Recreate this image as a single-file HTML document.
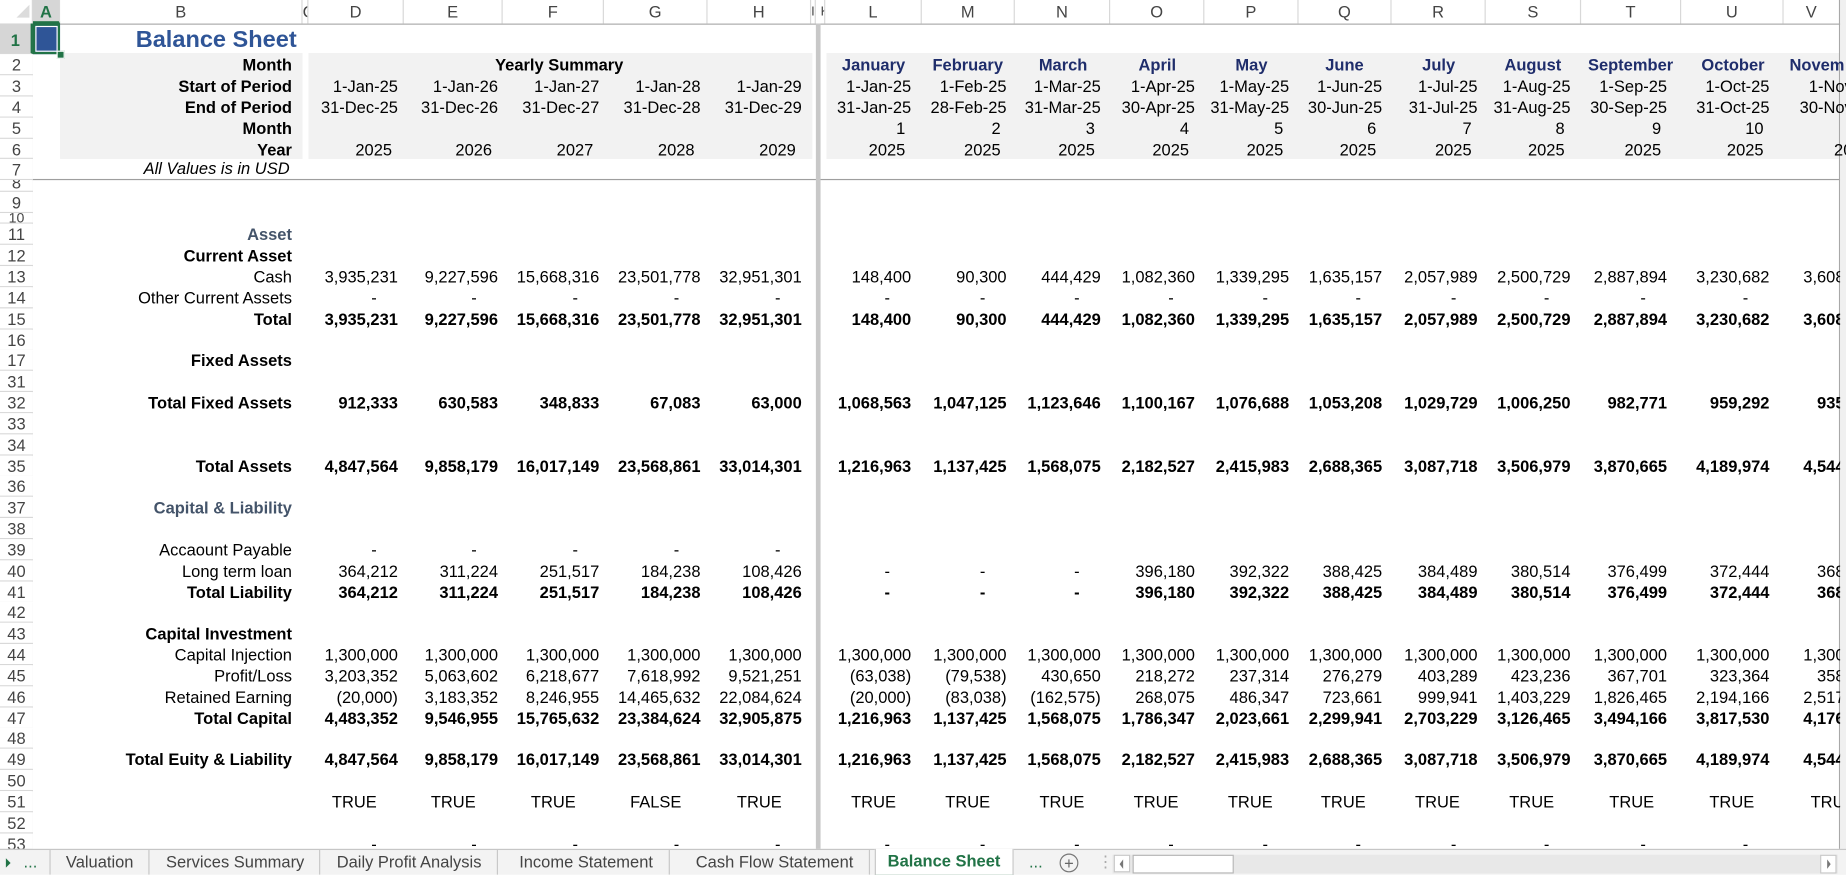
<!DOCTYPE html>
<html><head><meta charset="utf-8"><style>
html,body{margin:0;padding:0;background:#fff;overflow:hidden;width:1846px;height:875px}
#w{position:absolute;left:0;top:0;width:1568px;height:743px;transform:scale(1.17730);transform-origin:0 0;font-family:"Liberation Sans",Arial,sans-serif;font-size:14px;color:#000;overflow:hidden}
.ab{position:absolute}
.ch{position:absolute;top:0;height:20px;line-height:20px;text-align:center;color:#444;font-size:14px;border-right:1px solid #d8d8d8;box-sizing:border-box}
.rh{position:absolute;left:0;width:28px;text-align:center;color:#444;font-size:14px;border-bottom:1px solid #d8d8d8;box-sizing:border-box;background:#fff;overflow:hidden}
.r{position:absolute;left:0;width:1563px;height:18px;line-height:18px}
.c{position:absolute;top:0;width:100px;text-align:right;white-space:nowrap;box-sizing:border-box}
.lb{left:48px;width:200px}
.d{left:238px}.e{left:323px}.f{left:409px}.g{left:495px}.h{left:581px}
.l{left:674px}.m{left:755px}.n{left:835px}.o{left:915px}.p{left:995px}.q{left:1074px}.rr{left:1155px}.s{left:1234px}.t{left:1316px}.u{left:1403px}.v{left:1494px}
.z{padding-right:18px}
.y{padding-right:5px}
.bo{font-weight:bold}
.mo{font-weight:bold;color:#1f2d6b;text-align:center}
.tab{position:absolute;top:0;height:21px;line-height:20px;color:#444;font-size:14px;border-right:1px solid #c8c8c8;padding:0 13px}
</style></head><body><div id="w">

<div class="ab" style="left:51px;top:45px;width:206px;height:90px;background:#f2f2f2"></div>
<div class="ab" style="left:262px;top:45px;width:428px;height:90px;background:#f2f2f2"></div>
<div class="ab" style="left:702px;top:45px;width:861px;height:90px;background:#f2f2f2"></div>

<div class="ab" style="left:0;top:0;width:1568px;height:20px;background:#fff;border-bottom:1px solid #ababab"></div>
<div class="ab" style="left:0;top:0;width:28px;height:20px;border-right:1px solid #d8d8d8;box-sizing:border-box"></div>
<div class="ab" style="left:14px;top:4px;width:0;height:0;border-left:11px solid transparent;border-bottom:11px solid #dcdcdc"></div>
<div class="ch" style="left:28px;width:23px;background:#d6d6d6;color:#217346;font-weight:bold;border-bottom:2px solid #217346">A</div>
<div class="ch" style="left:51px;width:206px">B</div>
<div class="ch" style="left:257px;width:5px;overflow:hidden;text-align:left">C</div>
<div class="ch" style="left:262px;width:81px">D</div>
<div class="ch" style="left:343px;width:84px">E</div>
<div class="ch" style="left:427px;width:86px">F</div>
<div class="ch" style="left:513px;width:88px">G</div>
<div class="ch" style="left:601px;width:88px">H</div>
<div class="ch" style="left:689px;width:4px;overflow:hidden;font-size:11px">I</div>
<div class="ch" style="left:697px;width:4px;overflow:hidden;font-size:11px">K</div>
<div class="ch" style="left:701px;width:82px">L</div>
<div class="ch" style="left:783px;width:79px">M</div>
<div class="ch" style="left:862px;width:81px">N</div>
<div class="ch" style="left:943px;width:80px">O</div>
<div class="ch" style="left:1023px;width:80px">P</div>
<div class="ch" style="left:1103px;width:79px">Q</div>
<div class="ch" style="left:1182px;width:80px">R</div>
<div class="ch" style="left:1262px;width:81px">S</div>
<div class="ch" style="left:1343px;width:85px">T</div>
<div class="ch" style="left:1428px;width:87px">U</div>
<div class="ch" style="left:1515px;width:48px">V</div>

<div class="ab" style="left:27px;top:20px;width:1px;height:702px;background:#ababab"></div>
<div class="rh" style="top:20px;height:26px;line-height:28px;background:#d6d6d6;color:#217346;font-weight:bold;border-right:2px solid #217346">1</div>
<div class="rh" style="top:46px;height:18px;line-height:18px">2</div>
<div class="rh" style="top:64px;height:18px;line-height:18px">3</div>
<div class="rh" style="top:82px;height:18px;line-height:18px">4</div>
<div class="rh" style="top:100px;height:18px;line-height:18px">5</div>
<div class="rh" style="top:118px;height:17px;line-height:18px">6</div>
<div class="rh" style="top:135px;height:18px;line-height:18px">7</div>
<div class="rh" style="top:153px;height:10px;line-height:4px">8</div>
<div class="rh" style="top:163px;height:18px;line-height:18px">9</div>
<div class="rh" style="top:181px;height:9px;line-height:8px;font-size:12px">10</div>
<div class="rh" style="top:190px;height:18px;line-height:18px">11</div>
<div class="rh" style="top:208px;height:18px;line-height:18px">12</div>
<div class="rh" style="top:226px;height:18px;line-height:18px">13</div>
<div class="rh" style="top:244px;height:18px;line-height:18px">14</div>
<div class="rh" style="top:262px;height:18px;line-height:18px">15</div>
<div class="rh" style="top:280px;height:18px;line-height:18px">16</div>
<div class="rh" style="top:297px;height:18px;line-height:18px">17</div>
<div class="rh" style="top:315px;height:18px;line-height:18px">31</div>
<div class="rh" style="top:333px;height:18px;line-height:18px">32</div>
<div class="rh" style="top:351px;height:18px;line-height:18px">33</div>
<div class="rh" style="top:369px;height:18px;line-height:18px">34</div>
<div class="rh" style="top:387px;height:18px;line-height:18px">35</div>
<div class="rh" style="top:404px;height:18px;line-height:18px">36</div>
<div class="rh" style="top:422px;height:18px;line-height:18px">37</div>
<div class="rh" style="top:440px;height:18px;line-height:18px">38</div>
<div class="rh" style="top:458px;height:18px;line-height:18px">39</div>
<div class="rh" style="top:476px;height:18px;line-height:18px">40</div>
<div class="rh" style="top:494px;height:18px;line-height:18px">41</div>
<div class="rh" style="top:511px;height:18px;line-height:18px">42</div>
<div class="rh" style="top:529px;height:18px;line-height:18px">43</div>
<div class="rh" style="top:547px;height:18px;line-height:18px">44</div>
<div class="rh" style="top:565px;height:18px;line-height:18px">45</div>
<div class="rh" style="top:583px;height:18px;line-height:18px">46</div>
<div class="rh" style="top:601px;height:18px;line-height:18px">47</div>
<div class="rh" style="top:618px;height:18px;line-height:18px">48</div>
<div class="rh" style="top:636px;height:18px;line-height:18px">49</div>
<div class="rh" style="top:654px;height:18px;line-height:18px">50</div>
<div class="rh" style="top:672px;height:18px;line-height:18px">51</div>
<div class="rh" style="top:690px;height:18px;line-height:18px">52</div>
<div class="rh" style="top:708px;height:14px;line-height:18px">53</div>

<div class="ab" style="left:28px;top:20px;width:23px;height:26px;background:#2f5597;border:2px solid #217346;box-sizing:border-box"></div>
<div class="ab" style="left:30px;top:22px;width:19px;height:22px;background:#2f5597;border:1px solid #fff;box-sizing:border-box"></div>
<div class="ab" style="left:48px;top:43px;width:5px;height:5px;background:#217346;border:1px solid #fff"></div>

<div class="ab" style="left:28px;top:152px;width:1535px;height:1px;background:#9e9e9e"></div>
<div class="ab" style="left:693px;top:20px;width:4px;height:702px;background:#c8c8c8"></div>
<div class="ab" style="left:1562px;top:0;width:1px;height:722px;background:#a8a8a8"></div>
<div class="ab" style="left:1563px;top:0;width:5px;height:743px;background:#f0f0f0"></div>

<div class="ab" style="left:60px;top:21px;width:192px;text-align:right;font-size:20px;font-weight:bold;color:#2f5597;line-height:26px">Balance Sheet</div>

<div class="r bo" style="top:46px">
<span class="c lb">Month</span>
<span class="ab" style="left:375px;width:200px;text-align:center">Yearly Summary</span>
<span class="c mo" style="left:692px">January</span><span class="c mo" style="left:772px">February</span><span class="c mo" style="left:853px">March</span><span class="c mo" style="left:933px">April</span><span class="c mo" style="left:1013px">May</span><span class="c mo" style="left:1092px">June</span><span class="c mo" style="left:1172px">July</span><span class="c mo" style="left:1252px">August</span><span class="c mo" style="left:1335px">September</span><span class="c mo" style="left:1422px">October</span><span class="c mo" style="left:1520px;text-align:left;padding-left:0">Novem</span>
</div>
<div class="r" style="top:64px">
<span class="c lb bo">Start of Period</span>
<span class="c d">1-Jan-25</span><span class="c e">1-Jan-26</span><span class="c f">1-Jan-27</span><span class="c g">1-Jan-28</span><span class="c h">1-Jan-29</span>
<span class="c l">1-Jan-25</span><span class="c m">1-Feb-25</span><span class="c n">1-Mar-25</span><span class="c o">1-Apr-25</span><span class="c p">1-May-25</span><span class="c q">1-Jun-25</span><span class="c rr">1-Jul-25</span><span class="c s">1-Aug-25</span><span class="c t">1-Sep-25</span><span class="c u">1-Oct-25</span><span class="c v">1-Nov-25</span>
</div>
<div class="r" style="top:82px">
<span class="c lb bo">End of Period</span>
<span class="c d">31-Dec-25</span><span class="c e">31-Dec-26</span><span class="c f">31-Dec-27</span><span class="c g">31-Dec-28</span><span class="c h">31-Dec-29</span>
<span class="c l">31-Jan-25</span><span class="c m">28-Feb-25</span><span class="c n">31-Mar-25</span><span class="c o">30-Apr-25</span><span class="c p">31-May-25</span><span class="c q">30-Jun-25</span><span class="c rr">31-Jul-25</span><span class="c s">31-Aug-25</span><span class="c t">30-Sep-25</span><span class="c u">31-Oct-25</span><span class="c v">30-Nov-25</span>
</div>
<div class="r" style="top:100px">
<span class="c lb bo">Month</span>
<span class="c l y">1</span><span class="c m y">2</span><span class="c n y">3</span><span class="c o y">4</span><span class="c p y">5</span><span class="c q y">6</span><span class="c rr y">7</span><span class="c s y">8</span><span class="c t y">9</span><span class="c u y">10</span><span class="c v y">11</span>
</div>
<div class="r" style="top:118px">
<span class="c lb bo">Year</span>
<span class="c d y">2025</span><span class="c e y">2026</span><span class="c f y">2027</span><span class="c g y">2028</span><span class="c h y">2029</span>
<span class="c l y">2025</span><span class="c m y">2025</span><span class="c n y">2025</span><span class="c o y">2025</span><span class="c p y">2025</span><span class="c q y">2025</span><span class="c rr y">2025</span><span class="c s y">2025</span><span class="c t y">2025</span><span class="c u y">2025</span><span class="c v y">2025</span>
</div>
<div class="r" style="top:134px"><span class="c" style="left:46px;width:200px;font-style:italic">All Values is in USD</span></div>

<div class="ab" style="left:0;top:153px;width:1563px;height:569px;overflow:hidden">
<div class="ab" style="left:0;top:-153px;width:1563px;height:722px">

<div class="r" style="top:190px"><span class="c lb bo" style="color:#44546a">Asset</span></div>
<div class="r bo" style="top:208px"><span class="c lb">Current Asset</span></div>
<div class="r" style="top:226px"><span class="c lb">Cash</span>
<span class="c d">3,935,231</span><span class="c e">9,227,596</span><span class="c f">15,668,316</span><span class="c g">23,501,778</span><span class="c h">32,951,301</span>
<span class="c l">148,400</span><span class="c m">90,300</span><span class="c n">444,429</span><span class="c o">1,082,360</span><span class="c p">1,339,295</span><span class="c q">1,635,157</span><span class="c rr">2,057,989</span><span class="c s">2,500,729</span><span class="c t">2,887,894</span><span class="c u">3,230,682</span><span class="c v">3,608,516</span></div>
<div class="r" style="top:244px"><span class="c lb">Other Current Assets</span>
<span class="c d z">-</span><span class="c e z">-</span><span class="c f z">-</span><span class="c g z">-</span><span class="c h z">-</span><span class="c l z">-</span><span class="c m z">-</span><span class="c n z">-</span><span class="c o z">-</span><span class="c p z">-</span><span class="c q z">-</span><span class="c rr z">-</span><span class="c s z">-</span><span class="c t z">-</span><span class="c u z">-</span><span class="c v z">-</span></div>
<div class="r bo" style="top:262px"><span class="c lb">Total</span>
<span class="c d">3,935,231</span><span class="c e">9,227,596</span><span class="c f">15,668,316</span><span class="c g">23,501,778</span><span class="c h">32,951,301</span>
<span class="c l">148,400</span><span class="c m">90,300</span><span class="c n">444,429</span><span class="c o">1,082,360</span><span class="c p">1,339,295</span><span class="c q">1,635,157</span><span class="c rr">2,057,989</span><span class="c s">2,500,729</span><span class="c t">2,887,894</span><span class="c u">3,230,682</span><span class="c v">3,608,516</span></div>
<div class="r bo" style="top:297px"><span class="c lb">Fixed Assets</span></div>
<div class="r bo" style="top:333px"><span class="c lb">Total Fixed Assets</span>
<span class="c d">912,333</span><span class="c e">630,583</span><span class="c f">348,833</span><span class="c g">67,083</span><span class="c h">63,000</span>
<span class="c l">1,068,563</span><span class="c m">1,047,125</span><span class="c n">1,123,646</span><span class="c o">1,100,167</span><span class="c p">1,076,688</span><span class="c q">1,053,208</span><span class="c rr">1,029,729</span><span class="c s">1,006,250</span><span class="c t">982,771</span><span class="c u">959,292</span><span class="c v">935,813</span></div>
<div class="r bo" style="top:387px"><span class="c lb">Total Assets</span>
<span class="c d">4,847,564</span><span class="c e">9,858,179</span><span class="c f">16,017,149</span><span class="c g">23,568,861</span><span class="c h">33,014,301</span>
<span class="c l">1,216,963</span><span class="c m">1,137,425</span><span class="c n">1,568,075</span><span class="c o">2,182,527</span><span class="c p">2,415,983</span><span class="c q">2,688,365</span><span class="c rr">3,087,718</span><span class="c s">3,506,979</span><span class="c t">3,870,665</span><span class="c u">4,189,974</span><span class="c v">4,544,329</span></div>
<div class="r bo" style="top:422px"><span class="c lb" style="color:#44546a">Capital &amp; Liability</span></div>
<div class="r" style="top:458px"><span class="c lb">Accaount Payable</span>
<span class="c d z">-</span><span class="c e z">-</span><span class="c f z">-</span><span class="c g z">-</span><span class="c h z">-</span></div>
<div class="r" style="top:476px"><span class="c lb">Long term loan</span>
<span class="c d">364,212</span><span class="c e">311,224</span><span class="c f">251,517</span><span class="c g">184,238</span><span class="c h">108,426</span>
<span class="c l z">-</span><span class="c m z">-</span><span class="c n z">-</span><span class="c o">396,180</span><span class="c p">392,322</span><span class="c q">388,425</span><span class="c rr">384,489</span><span class="c s">380,514</span><span class="c t">376,499</span><span class="c u">372,444</span><span class="c v">368,349</span></div>
<div class="r bo" style="top:494px"><span class="c lb">Total Liability</span>
<span class="c d">364,212</span><span class="c e">311,224</span><span class="c f">251,517</span><span class="c g">184,238</span><span class="c h">108,426</span>
<span class="c l z">-</span><span class="c m z">-</span><span class="c n z">-</span><span class="c o">396,180</span><span class="c p">392,322</span><span class="c q">388,425</span><span class="c rr">384,489</span><span class="c s">380,514</span><span class="c t">376,499</span><span class="c u">372,444</span><span class="c v">368,349</span></div>
<div class="r bo" style="top:529px"><span class="c lb">Capital Investment</span></div>
<div class="r" style="top:547px"><span class="c lb">Capital Injection</span>
<span class="c d">1,300,000</span><span class="c e">1,300,000</span><span class="c f">1,300,000</span><span class="c g">1,300,000</span><span class="c h">1,300,000</span>
<span class="c l">1,300,000</span><span class="c m">1,300,000</span><span class="c n">1,300,000</span><span class="c o">1,300,000</span><span class="c p">1,300,000</span><span class="c q">1,300,000</span><span class="c rr">1,300,000</span><span class="c s">1,300,000</span><span class="c t">1,300,000</span><span class="c u">1,300,000</span><span class="c v">1,300,000</span></div>
<div class="r" style="top:565px"><span class="c lb">Profit/Loss</span>
<span class="c d">3,203,352</span><span class="c e">5,063,602</span><span class="c f">6,218,677</span><span class="c g">7,618,992</span><span class="c h">9,521,251</span>
<span class="c l">(63,038)</span><span class="c m">(79,538)</span><span class="c n">430,650</span><span class="c o">218,272</span><span class="c p">237,314</span><span class="c q">276,279</span><span class="c rr">403,289</span><span class="c s">423,236</span><span class="c t">367,701</span><span class="c u">323,364</span><span class="c v">358,886</span></div>
<div class="r" style="top:583px"><span class="c lb">Retained Earning</span>
<span class="c d">(20,000)</span><span class="c e">3,183,352</span><span class="c f">8,246,955</span><span class="c g">14,465,632</span><span class="c h">22,084,624</span>
<span class="c l">(20,000)</span><span class="c m">(83,038)</span><span class="c n">(162,575)</span><span class="c o">268,075</span><span class="c p">486,347</span><span class="c q">723,661</span><span class="c rr">999,941</span><span class="c s">1,403,229</span><span class="c t">1,826,465</span><span class="c u">2,194,166</span><span class="c v">2,517,530</span></div>
<div class="r bo" style="top:601px"><span class="c lb">Total Capital</span>
<span class="c d">4,483,352</span><span class="c e">9,546,955</span><span class="c f">15,765,632</span><span class="c g">23,384,624</span><span class="c h">32,905,875</span>
<span class="c l">1,216,963</span><span class="c m">1,137,425</span><span class="c n">1,568,075</span><span class="c o">1,786,347</span><span class="c p">2,023,661</span><span class="c q">2,299,941</span><span class="c rr">2,703,229</span><span class="c s">3,126,465</span><span class="c t">3,494,166</span><span class="c u">3,817,530</span><span class="c v">4,176,416</span></div>
<div class="r bo" style="top:636px"><span class="c lb">Total Euity &amp; Liability</span>
<span class="c d">4,847,564</span><span class="c e">9,858,179</span><span class="c f">16,017,149</span><span class="c g">23,568,861</span><span class="c h">33,014,301</span>
<span class="c l">1,216,963</span><span class="c m">1,137,425</span><span class="c n">1,568,075</span><span class="c o">2,182,527</span><span class="c p">2,415,983</span><span class="c q">2,688,365</span><span class="c rr">3,087,718</span><span class="c s">3,506,979</span><span class="c t">3,870,665</span><span class="c u">4,189,974</span><span class="c v">4,544,329</span></div>
<div class="r" style="top:672px">
<span class="c" style="left:251px;text-align:center">TRUE</span><span class="c" style="left:335px;text-align:center">TRUE</span><span class="c" style="left:420px;text-align:center">TRUE</span><span class="c" style="left:507px;text-align:center">FALSE</span><span class="c" style="left:595px;text-align:center">TRUE</span>
<span class="c" style="left:692px;text-align:center">TRUE</span><span class="c" style="left:772px;text-align:center">TRUE</span><span class="c" style="left:852px;text-align:center">TRUE</span><span class="c" style="left:932px;text-align:center">TRUE</span><span class="c" style="left:1012px;text-align:center">TRUE</span><span class="c" style="left:1091px;text-align:center">TRUE</span><span class="c" style="left:1171px;text-align:center">TRUE</span><span class="c" style="left:1251px;text-align:center">TRUE</span><span class="c" style="left:1336px;text-align:center">TRUE</span><span class="c" style="left:1421px;text-align:center">TRUE</span><span class="c" style="left:1507px;text-align:center">TRUE</span></div>
<div class="r" style="top:708px">
<span class="c d z">-</span><span class="c e z">-</span><span class="c f z">-</span><span class="c g z">-</span><span class="c h z">-</span><span class="c l z">-</span><span class="c m z">-</span><span class="c n z">-</span><span class="c o z">-</span><span class="c p z">-</span><span class="c q z">-</span><span class="c rr z">-</span><span class="c s z">-</span><span class="c t z">-</span><span class="c u z">-</span></div>
</div></div>

<div class="ab" style="left:0;top:721px;width:1568px;height:22px;background:#f3f3f3;border-top:1px solid #c6c6c6">
<div class="ab" style="left:5px;top:7px;width:0;height:0;border-top:4px solid transparent;border-bottom:4px solid transparent;border-left:4px solid #217346"></div>
<div class="tab" style="left:10px;padding:0 10px;color:#217346">...</div>
<div class="tab" style="left:43px">Valuation</div>
<div class="tab" style="left:128px">Services Summary</div>
<div class="tab" style="left:273px">Daily Profit Analysis</div>
<div class="tab" style="left:428px">Income Statement</div>
<div class="tab" style="left:578px">Cash Flow Statement</div>
<div class="tab" style="left:743px;top:-1px;height:22px;background:#fff;color:#217346;font-weight:bold;padding:0 10px;border-bottom:2px solid #217346;border-left:1px solid #c6c6c6">Balance Sheet</div>
<div class="ab" style="left:874px;top:0;line-height:20px;color:#217346">...</div>
<div class="ab" style="left:900px;top:3px;width:14px;height:14px;border:1px solid #777;border-radius:50%;text-align:center;line-height:14px;font-size:14px;color:#666">+</div>
<div class="ab" style="left:932px;top:0;line-height:20px;color:#aaa">⋮</div>
<div class="ab" style="left:945px;top:4px;width:616px;height:16px;background:#e8e8e8"></div>
<div class="ab" style="left:946px;top:4px;width:14px;height:15px;background:#fff;border:1px solid #c8c8c8;box-sizing:border-box"></div>
<div class="ab" style="left:951px;top:8px;width:0;height:0;border-top:4px solid transparent;border-bottom:4px solid transparent;border-right:3px solid #777"></div>
<div class="ab" style="left:962px;top:4px;width:86px;height:16px;background:#fff;border:1px solid #b5b5b5;box-sizing:border-box"></div>
<div class="ab" style="left:1546px;top:4px;width:14px;height:16px;background:#fff;border:1px solid #c8c8c8;box-sizing:border-box"></div>
<div class="ab" style="left:1552px;top:8px;width:0;height:0;border-top:4px solid transparent;border-bottom:4px solid transparent;border-left:3px solid #777"></div>
</div>
</div></body></html>
